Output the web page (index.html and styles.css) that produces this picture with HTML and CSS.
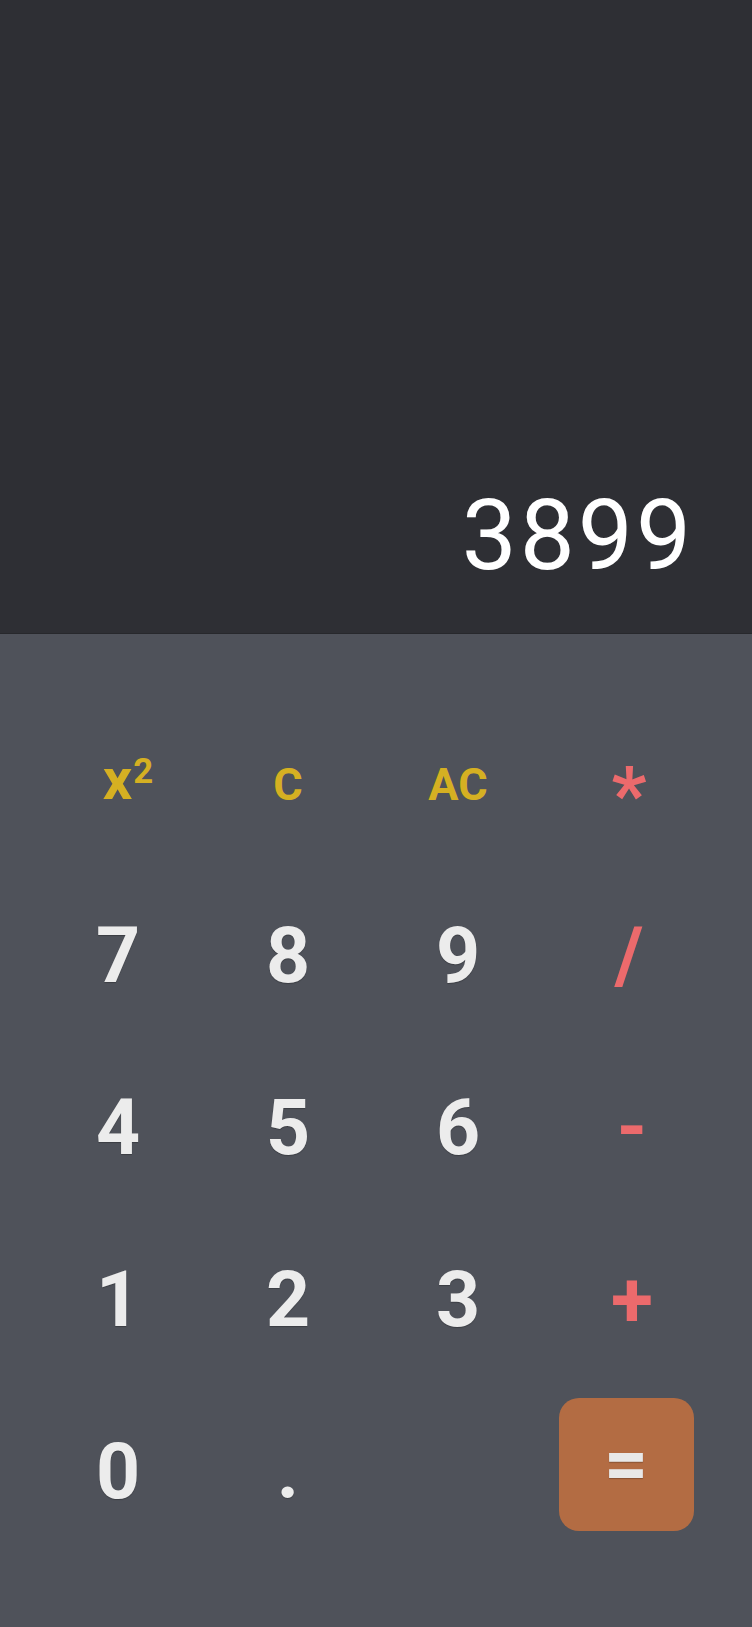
FILE: index.html
```html
<!DOCTYPE html>
<html lang="en">
<head>
  <meta charset="UTF-8">
  <meta name="viewport" content="width=device-width, initial-scale=1.0">
  <title>Calculator</title>
  <link rel="stylesheet" href="styles.css">
</head>
<body>
  <div class="calculator">
    <!-- result display -->
    <div class="display">
      <div class="display-value">3899</div>
    </div>

    <!-- keypad -->
    <div class="keypad">
      <button class="key key-fn key-square">x<sup>2</sup></button>
      <button class="key key-fn">C</button>
      <button class="key key-fn">AC</button>
      <button class="key key-op key-mul">*</button>

      <button class="key">7</button>
      <button class="key">8</button>
      <button class="key">9</button>
      <button class="key key-op key-div">/</button>

      <button class="key">4</button>
      <button class="key">5</button>
      <button class="key">6</button>
      <button class="key key-op">-</button>

      <button class="key">1</button>
      <button class="key">2</button>
      <button class="key">3</button>
      <button class="key key-op">+</button>

      <button class="key">0</button>
      <button class="key">.</button>
      <div class="key-empty"></div>
      <button class="key key-equals"><span class="equals-box">=</span></button>
    </div>
  </div>
</body>
</html>
```

FILE: styles.css
```css
html, body {
  margin: 0;
  padding: 0;
  height: 100%;
}
body {
  font-family: Roboto, 'Noto Sans', Arial, sans-serif;
  background: #4f525a;
}
.calculator {
  display: flex;
  flex-direction: column;
  height: 100%;
}
.display {
  height: 634px;
  background: #2e2f34;
  border-bottom: 1px solid #27282c;
  display: flex;
  align-items: flex-end;
  justify-content: flex-end;
  padding: 0 58px 48px 0;
  box-sizing: border-box;
}
.display-value {
  color: #fff;
  font-size: 98px;
  font-weight: 400;
  line-height: 1;
  letter-spacing: 3px;
}
.keypad {
  flex: 1;
  background: #4f525a;
  display: grid;
  grid-template-columns: repeat(4, 170px);
  grid-auto-rows: 172px;
  padding: 64px 40px 0 33px;
}
.key {
  background: none;
  border: none;
  outline: none;
  padding: 0;
  margin: 0;
  font-family: inherit;
  font-size: 77px;
  font-weight: 700;
  line-height: 1;
  color: #ececec;
  text-shadow: 0 1px 1px rgba(0, 0, 0, 0.25);
  display: flex;
  align-items: center;
  justify-content: center;
  cursor: pointer;
}
.key-fn {
  font-size: 45px;
  color: #d5b022;
  text-shadow: none;
}
.key-square {
  font-size: 58px;
  padding-bottom: 10px;
}
.key-square sup {
  font-size: 0.6em;
  line-height: 0;
  vertical-align: 1.2em;
  position: relative;
  top: -8px;
  margin-left: 1px;
  margin-right: -20px;
}
.key-op {
  color: #ec6a6c;
  text-shadow: none;
  padding-left: 8px;
}
.key-mul {
  padding-left: 2px;
  padding-top: 22px;
}
.key-div {
  padding-left: 2px;
}
.equals-box {
  width: 135px;
  height: 133px;
  border-radius: 20px;
  background: #b36c43;
  color: #e8e8e8;
  display: flex;
  align-items: center;
  justify-content: center;
  margin-top: -16px;
  margin-left: -4px;
}
```
